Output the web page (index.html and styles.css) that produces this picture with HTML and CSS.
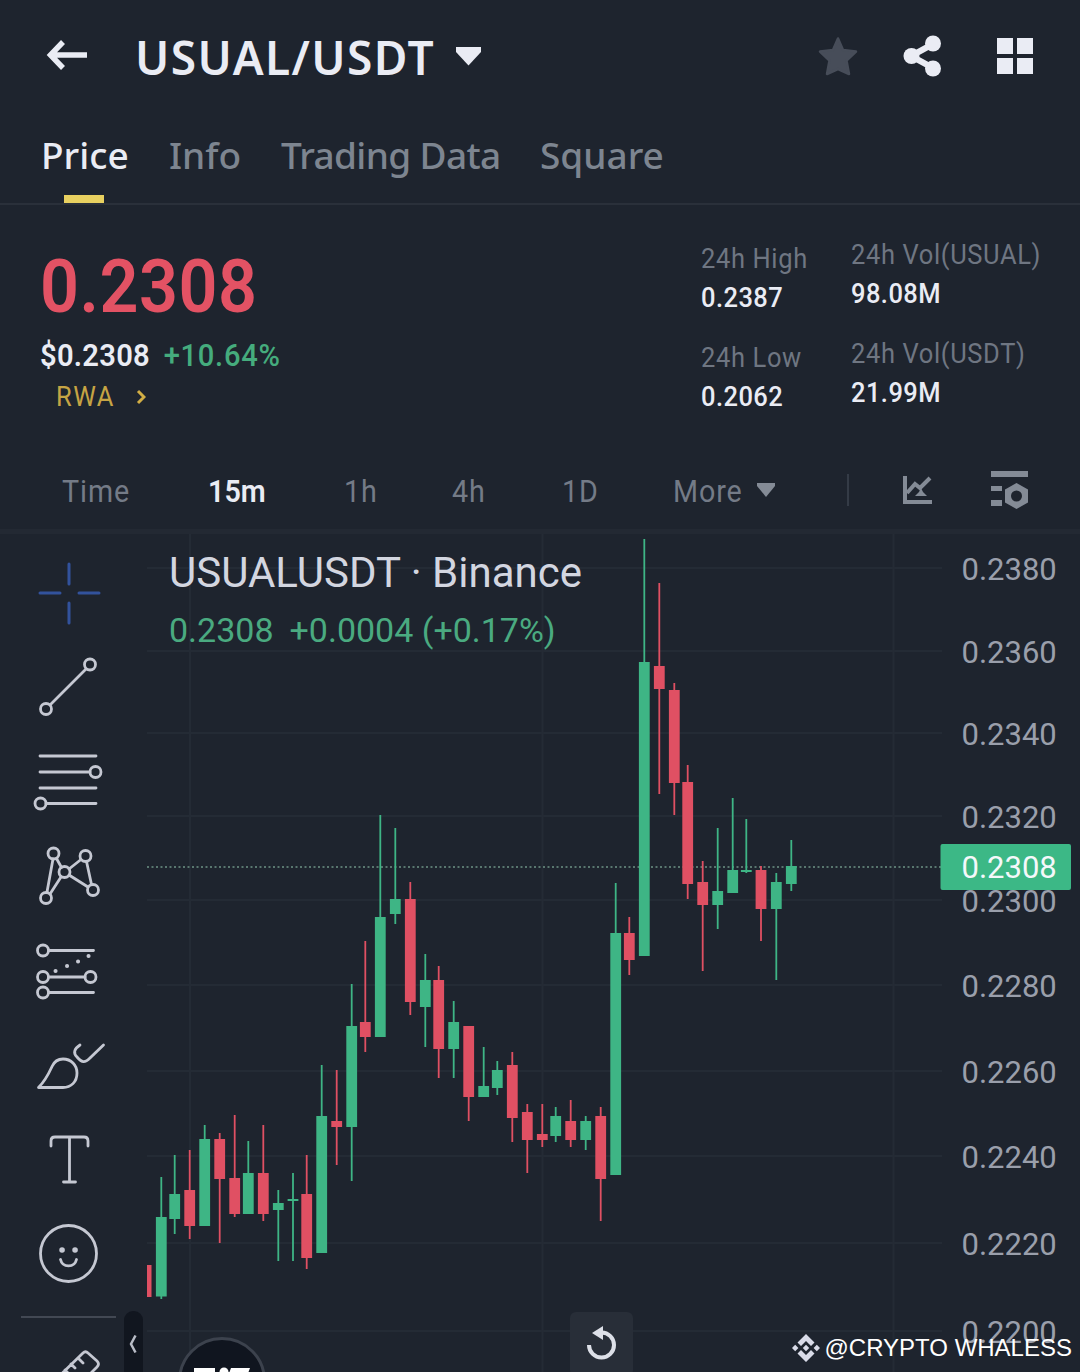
FILE: index.html
```html
<!DOCTYPE html>
<html lang="en">
<head>
    <meta charset="UTF-8">
    <meta name="viewport" content="width=device-width, initial-scale=1.0">
    <title>USUAL/USDT</title>
    <link rel="stylesheet" href="styles.css">
</head>
<body>
    <header class="header">
        <svg class="back" width="42" height="34" viewBox="0 0 42 34"><path d="M41 16H5M17 3L4.500 16l12.500 13"/></svg>
        <h1 class="pair">USUAL/USDT</h1>
        <svg class="caret" width="26" height="20" viewBox="0 0 26 20"><path d="M0 1h25v5L12.500 19.500 0 6z"/></svg>
        <div class="actions">
            <svg width="40" height="42" viewBox="0 0 40 42"><path class="star" d="M20 3.500l5 11.500 13 1.500-9.500 9L31 39l-11-5-11 5 2.500-13.500L2 16.500 15 15z"/></svg>
            <svg class="share" width="40" height="42" viewBox="0 0 40 42"><path d="M8 21L31 8.500M8 21l23 12.500"/><circle cx="8.500" cy="21" r="8"/><circle cx="30" cy="8.500" r="8"/><circle cx="30" cy="33.500" r="8"/></svg>
            <svg class="apps" width="36" height="36" viewBox="0 0 36 36"><path d="M0 0h16v16H0zM20 0h16v16H20zM0 20h16v16H0zM20 20h16v16H20z"/></svg>
        </div>
    </header>

    <nav class="tabs">
        <a class="tab active">Price</a>
        <a class="tab">Info</a>
        <a class="tab long">Trading Data</a>
        <a class="tab">Square</a>
    </nav>

    <section class="ticker">
        <div class="quote">
            <div class="last narrow">0.2308</div>
            <div class="change narrow"><b>$0.2308</b><span>+10.64%</span></div>
            <div class="tag"><span class="narrow">RWA</span><svg width="10" height="16" viewBox="0 0 10 16"><path d="M2 2l6 6-6 6"/></svg></div>
        </div>
        <dl class="stats">
            <div><dt class="narrow">24h High</dt><dd class="narrow">0.2387</dd></div>
            <div><dt class="narrow">24h Low</dt><dd class="narrow">0.2062</dd></div>
        </dl>
        <dl class="stats volume">
            <div><dt class="narrow">24h Vol(USUAL)</dt><dd class="narrow">98.08M</dd></div>
            <div><dt class="narrow">24h Vol(USDT)</dt><dd class="narrow">21.99M</dd></div>
        </dl>
    </section>

    <div class="intervals">
        <span class="narrow">Time</span>
        <span class="narrow selected">15m</span>
        <span class="narrow">1h</span>
        <span class="narrow">4h</span>
        <span class="narrow">1D</span>
        <span class="narrow">More</span>
        <svg class="more" width="18" height="14" viewBox="0 0 18 14"><path d="M0 0h18v3L9 14 0 3z"/></svg>
        <i class="sep"></i>
        <svg class="kind" width="30" height="30" viewBox="0 0 30 30"><path d="M2 1v26h27M4 18l8-9 5 4L27 3"/><path class="solid" d="M18 13l2 4 4 4H12l4-4z"/></svg>
        <svg class="prefs" width="38" height="40" viewBox="0 0 38 40"><path d="M0 1h37v6H0zM0 16h11v5H0zM0 30h11v6H0z"/><path fill-rule="evenodd" d="M25.500 13L37 19.500v13L25.500 39 14 32.500v-13zM25.500 20.500a5.500 5.500 0 1 0 0 11 5.500 5.500 0 1 0 0-11z"/></svg>
    </div>

    <main class="chart">
        <div class="tools">
            <svg class="cross" viewBox="0 0 124 94"><path d="M69 18v20M69 57v20M40 47h20M79 47h20"/></svg>
            <svg viewBox="0 0 124 94"><path d="M50 65l36-36"/><circle cx="90" cy="24.500" r="5.500"/><circle cx="46" cy="69" r="5.500"/></svg>
            <svg viewBox="0 0 124 94"><path d="M40 22h56M40 38h50M40 54h56M46 69.500h50"/><circle cx="95.500" cy="38" r="5.500"/><circle cx="40.500" cy="69.500" r="5.500"/></svg>
            <svg viewBox="0 0 124 94"><path d="M53 31l-6 33M56.500 30.500l5 9M69 41l12-9.500M50 66l11-17M69 47l19 12M86.500 33.500l5 23"/><circle cx="53.500" cy="25.500" r="5.500"/><circle cx="85.500" cy="28" r="5.500"/><circle cx="64.500" cy="44" r="5.500"/><circle cx="46" cy="70" r="5.500"/><circle cx="93" cy="62" r="5.500"/></svg>
            <svg viewBox="0 0 124 94"><path d="M49 28.500h44.500M49 55h36M49 70.500h44.500"/><path class="dots" d="M55.500 49h.1M67 44h.1M78 39.500h.1M88.500 34h.1"/><circle cx="43" cy="28.500" r="5.500"/><circle cx="43" cy="55" r="5.500"/><circle cx="90.500" cy="55" r="5.500"/><circle cx="43" cy="70.500" r="5.500"/></svg>
            <svg viewBox="0 0 124 94"><path d="M38.500 71.500C46 64 49 57 52 50.500C54.500 45 58 43 63 43c8 0 14 6 14 14 0 9-6 14.500-14 14.500zM80 29c-6 4-7 8-3 12 5 6 8 6 13 1l13.500-13"/></svg>
            <svg viewBox="0 0 124 94"><path d="M51 36v-5q0-4 4-4h29q4 0 4 4v5M69.500 27v45M63.500 72h12"/></svg>
            <svg viewBox="0 0 124 94"><circle cx="68.500" cy="49.500" r="28"/><path d="M60.500 55.500c2 8.500 14 8.500 16 0"/><path class="dots eyes" d="M62 46h.1M75 46h.1"/></svg>
            <hr>
            <svg class="ruler" viewBox="0 0 124 54"><path d="M45 72l38-37q2.500-2.500 5 0l9 8q3 3 0 6L76 70M78 40l5 5M71 46l4 4M65 52l5 5"/></svg>
        </div>

        <div class="handle"><svg width="10" height="20" viewBox="0 0 10 20"><path d="M7.500 1.500L3 10l4.500 8.500"/></svg></div>

        <svg class="plot" id="plot" width="940" height="838" viewBox="140 534 940 838"></svg>

        <div class="legend">
            <div class="symbol">USUALUSDT · Binance</div>
            <div class="delta"><span>0.2308</span><span>+0.0004 (+0.17%)</span></div>
        </div>

        <svg class="tv" width="88" height="36" viewBox="0 0 88 36"><circle cx="44" cy="45" r="42.500"/><path d="M16 32h21v8H16zM53 32h19l-3 8H50z"/><circle class="dot" cx="46" cy="36" r="4.500"/></svg>

        <div class="reset"><svg width="32" height="36" viewBox="0 0 32 36"><path d="M4 20a12.500 12.500 0 1 0 12.500-12.500"/><path class="solid" d="M7 8l11-7v14z"/></svg></div>

        <div class="credit">
            <svg width="28" height="28" viewBox="0 0 28 28"><path d="M14 0l8.500 8.500-3.500 3.500-5-5-5 5-3.500-3.500zM14 28l8.500-8.500-3.500-3.500-5 5-5-5-3.500 3.500zM3.200 10.800L6.400 14l-3.200 3.200L0 14zM24.800 10.800L28 14l-3.200 3.200-3.200-3.200zM14 10.800l3.200 3.200-3.200 3.200-3.200-3.200z"/></svg>
            <span>@CRYPTO WHALESS</span>
        </div>
    </main>

    <script src="chart.js"></script>
</body>
</html>
```
FILE: styles.css
```css
* {
    box-sizing: border-box;
}

body {
    margin: 0;
    height: 1372px;
    overflow: hidden;
    background: #1e242e;
    color: #eaecf4;
    font-family: Roboto, "Liberation Sans", sans-serif;
}

svg {
    display: block;
    flex: none;
}

/* condensed look of the number face */
.narrow {
    transform: scaleX(0.91);
    transform-origin: left center;
    white-space: nowrap;
}

.header {
    display: flex;
    align-items: center;
    height: 112px;
    padding: 0 47px 0 46px;
}

.back {
    fill: none;
    stroke: #eaecf4;
    stroke-width: 5.5;
}

.pair {
    width: 320px;
    margin: 2px 0 0 47px;
    font-family: "Noto Sans", sans-serif;
    font-size: 46px;
    font-weight: 600;
    line-height: 60px;
    letter-spacing: 1.4px;
}

.caret,
.apps {
    fill: #eaecf4;
}

.caret {
    margin-left: 1px;
}

.actions {
    display: flex;
    align-items: center;
    margin-left: auto;
}

.star {
    fill: #474d59;
    stroke: #474d59;
    stroke-width: 2.5;
    stroke-linejoin: round;
}

.share {
    margin: 0 54px 0 45px;
    fill: #eaecf4;
    stroke: #eaecf4;
    stroke-width: 6;
}

.share circle {
    stroke: none;
}

.tabs {
    display: grid;
    grid-template-columns: 128px 112px 259px 140px;
    height: 93px;
    padding-left: 41px;
    border-bottom: 2px solid #2a303a;
    font-family: "Noto Sans", sans-serif;
    font-size: 37px;
    font-weight: 500;
    line-height: 86px;
    color: #7d8590;
    white-space: nowrap;
}

.tab {
    height: 92px;
}

.tab.long {
    letter-spacing: -0.65px;
}

.tab.active {
    color: #eaecf4;
}

.tab.active::after {
    content: "";
    display: block;
    width: 40px;
    height: 8px;
    margin: -3px 0 0 23px;
    background: #e8d060;
}

.ticker {
    display: flex;
    height: 245px;
    padding: 34px 0 0 40px;
}

.quote {
    width: 661px;
}

.last {
    height: 94px;
    font-size: 75px;
    font-weight: 600;
    line-height: 94px;
    letter-spacing: 0.6px;
    color: #e35264;
}

.change {
    display: flex;
    gap: 15px;
    font-size: 32px;
    line-height: 44px;
}

.change b {
    font-weight: 600;
    letter-spacing: 0.3px;
}

.change span {
    font-weight: 500;
    letter-spacing: 0.8px;
    color: #45ac7d;
}

.tag {
    display: flex;
    align-items: center;
    padding: 2px 0 0 16px;
    font-size: 28px;
    line-height: 36px;
    letter-spacing: 1.6px;
    color: #c6a444;
}

.tag span {
    width: 80px;
}

.tag svg {
    fill: none;
    stroke: #d2ae45;
    stroke-width: 3;
}

.stats {
    width: 150px;
    margin: 0;
    font-size: 28px;
}

.stats div {
    height: 99px;
}

.stats dt {
    line-height: 39px;
    letter-spacing: 0.7px;
    color: #6f7682;
}

.stats dd {
    margin: 0;
    font-weight: 500;
    line-height: 39px;
    letter-spacing: 0.5px;
}

.volume {
    margin-top: -4px;
}

.intervals {
    display: grid;
    grid-template-columns: 146px 136px 108px 110px 111px 84px 90px 56px 88px 38px;
    align-items: center;
    height: 79px;
    padding-left: 62px;
    font-size: 31.5px;
    letter-spacing: 1px;
    color: #747b87;
}

.intervals span {
    padding-top: 3px;
}

.intervals .selected {
    font-weight: 600;
    letter-spacing: 0;
    color: #eaecf4;
}

.more {
    fill: #848b96;
}

.sep {
    width: 2px;
    height: 32px;
    background: #343b46;
}

.kind {
    fill: none;
    stroke: #848b96;
    stroke-width: 4;
}

.kind .solid {
    fill: #848b96;
    stroke: none;
}

.prefs {
    fill: #848b96;
}

.chart {
    position: relative;
    display: flex;
    height: 843px;
    border-top: 5px solid #232933;
}

.tools {
    width: 124px;
    flex: none;
    padding-top: 12px;
    overflow: hidden;
}

.tools svg {
    width: 124px;
    height: 94px;
    fill: none;
    stroke: #c5c8d2;
    stroke-width: 2.8;
    stroke-linecap: round;
    stroke-linejoin: round;
}

.tools .cross {
    stroke: #32529c;
    stroke-width: 3;
}

.tools .dots {
    stroke-width: 4;
}

.tools .eyes {
    stroke-width: 5.5;
}

.tools hr {
    width: 95px;
    height: 2px;
    margin: 18px 0 0 21px;
    border: 0;
    background: #424853;
}

.tools .ruler {
    height: 54px;
}

.handle {
    width: 19px;
    flex: none;
    height: 80px;
    margin-top: 777px;
    padding: 23px 0 0 4px;
    border-radius: 9px;
    background: #11161f;
}

.handle svg {
    fill: none;
    stroke: #b8bcc6;
    stroke-width: 2.5;
}

.plot {
    margin-left: -3px;
    font-size: 31px;
}

.grid {
    stroke: #242b35;
    stroke-width: 2;
}

.last-line {
    stroke: #59776f;
    stroke-width: 2;
    stroke-dasharray: 2 2.5;
}

.up {
    fill: #3eb585;
    stroke: #3eb585;
}

.down {
    fill: #e05063;
    stroke: #e05063;
}

.wick {
    stroke-width: 1.8;
}

.body {
    stroke: none;
}

.axis {
    fill: #9a9fab;
}

.price-tag {
    fill: #3cb886;
}

.price-text {
    fill: #f4f8fa;
}

.legend {
    position: absolute;
    top: 12px;
    left: 169px;
    white-space: nowrap;
}

.symbol {
    font-size: 42px;
    line-height: 54px;
    color: #d3d6e0;
}

.delta {
    display: flex;
    gap: 16px;
    margin-top: 5px;
    font-size: 34px;
    line-height: 50px;
    color: #4aaa80;
}

.tv {
    position: absolute;
    left: 178px;
    bottom: 0;
    fill: #fff;
}

.tv circle {
    fill: #10151f;
    stroke: #3c424d;
    stroke-width: 3;
}

.tv .dot {
    fill: #fff;
    stroke: none;
}

.reset {
    position: absolute;
    left: 570px;
    bottom: -4px;
    width: 63px;
    height: 64px;
    padding: 13px 0 0 15px;
    border-radius: 6px;
    background: #282e38;
}

.reset svg {
    fill: none;
    stroke: #dde0e8;
    stroke-width: 4;
}

.reset .solid {
    fill: #dde0e8;
    stroke: none;
}

.credit {
    position: absolute;
    right: 8px;
    bottom: 9px;
    display: flex;
    align-items: center;
    gap: 4px;
    font-family: "Liberation Sans", Arial, sans-serif;
    font-size: 24px;
    line-height: 30px;
    color: #fff;
}

.credit svg {
    fill: #d9dbe8;
}
```
FILE: chart.js
```js
// x, high, body top, body bottom, low, direction
const candles = [
    [161.3, 1177, 1217, 1296.5, 1299, 'up'],
    [174.7, 1155, 1194, 1219, 1234, 'up'],
    [189.7, 1150, 1190, 1226, 1239, 'down'],
    [204.7, 1125, 1139, 1226, 1226, 'up'],
    [219.7, 1133, 1139, 1179, 1243, 'down'],
    [234.7, 1115, 1178, 1214, 1217, 'down'],
    [248.3, 1141, 1173, 1214, 1214, 'up'],
    [263.3, 1125, 1173, 1214, 1221, 'down'],
    [278.3, 1190, 1203, 1210, 1261, 'up'],
    [293.0, 1173, 1199, 1201, 1261, 'up'],
    [306.7, 1155, 1194, 1258, 1269, 'down'],
    [321.7, 1065, 1116, 1253, 1253, 'up'],
    [336.7, 1070, 1121, 1127, 1165, 'down'],
    [351.7, 984, 1026, 1127, 1181, 'up'],
    [365.3, 941, 1022, 1037, 1052, 'down'],
    [380.3, 815, 917, 1037, 1037, 'up'],
    [395.3, 828, 899, 914, 924, 'up'],
    [410.3, 882, 899, 1002, 1015, 'down'],
    [425.3, 954, 980, 1007, 1047, 'up'],
    [438.7, 966, 980, 1049, 1078, 'down'],
    [453.7, 1001, 1022, 1049, 1078, 'up'],
    [468.7, 1026, 1026, 1097, 1121, 'down'],
    [483.7, 1047, 1086, 1097, 1097, 'up'],
    [497.3, 1061, 1070, 1088, 1095, 'up'],
    [512.3, 1052, 1065, 1118, 1142, 'down'],
    [527.3, 1104, 1112, 1140, 1173, 'down'],
    [542.3, 1104, 1134, 1140, 1147, 'down'],
    [555.7, 1107, 1116, 1136, 1142, 'up'],
    [570.7, 1100, 1121, 1140, 1147, 'down'],
    [585.7, 1116, 1121, 1140, 1150, 'up'],
    [600.7, 1107, 1116, 1179, 1221, 'down'],
    [615.7, 883, 933, 1175, 1175, 'up'],
    [629.3, 917, 933, 960, 975, 'down'],
    [644.3, 539, 662, 956, 956, 'up'],
    [659.3, 583, 666, 689, 794, 'down'],
    [674.3, 683, 690, 783, 815, 'down'],
    [687.7, 765, 782, 884, 899, 'down'],
    [702.7, 861, 882, 905, 971, 'down'],
    [717.7, 828, 891, 905, 929, 'up'],
    [732.7, 798, 870, 893, 893, 'up'],
    [746.3, 819, 870, 872, 873, 'up'],
    [761.0, 866, 870, 909, 941, 'down'],
    [776.3, 873, 882, 909, 980, 'up'],
    [791.3, 840, 866, 884, 891, 'up']
];

const levels = [
    [568, '0.2380'], [651, '0.2360'], [733, '0.2340'], [816, '0.2320'], [900, '0.2300'],
    [985, '0.2280'], [1071, '0.2260'], [1156, '0.2240'], [1243, '0.2220'], [1331, '0.2200']
];

let out = '';

// grid
levels.forEach(([y, label]) => {
    out += `<path class="grid" d="M147 ${y}H942"/>`;
    out += `<text class="axis" x="961.5" y="${y + 11.5}">${label}</text>`;
});
[190, 542.5, 893.5].forEach(x => {
    out += `<path class="grid" d="M${x} 534V1372"/>`;
});

// last price
out += '<path class="last-line" d="M147 867H941"/>';

// the first candle is cut by the left edge
out += '<rect class="down body" x="147" y="1265" width="4.500" height="32"/>';
candles.forEach(([x, high, top, bottom, low, dir]) => {
    out += `<path class="${dir} wick" d="M${x} ${high}V${low}"/>`;
    out += `<rect class="${dir} body" x="${x - 5.4}" y="${top}" width="10.8" height="${bottom - top}"/>`;
});

out += '<rect class="price-tag" x="940.500" y="844" width="130.500" height="46" rx="2"/>';
out += '<text class="price-text" x="961.5" y="878">0.2308</text>';

document.getElementById('plot').innerHTML = out;
```
